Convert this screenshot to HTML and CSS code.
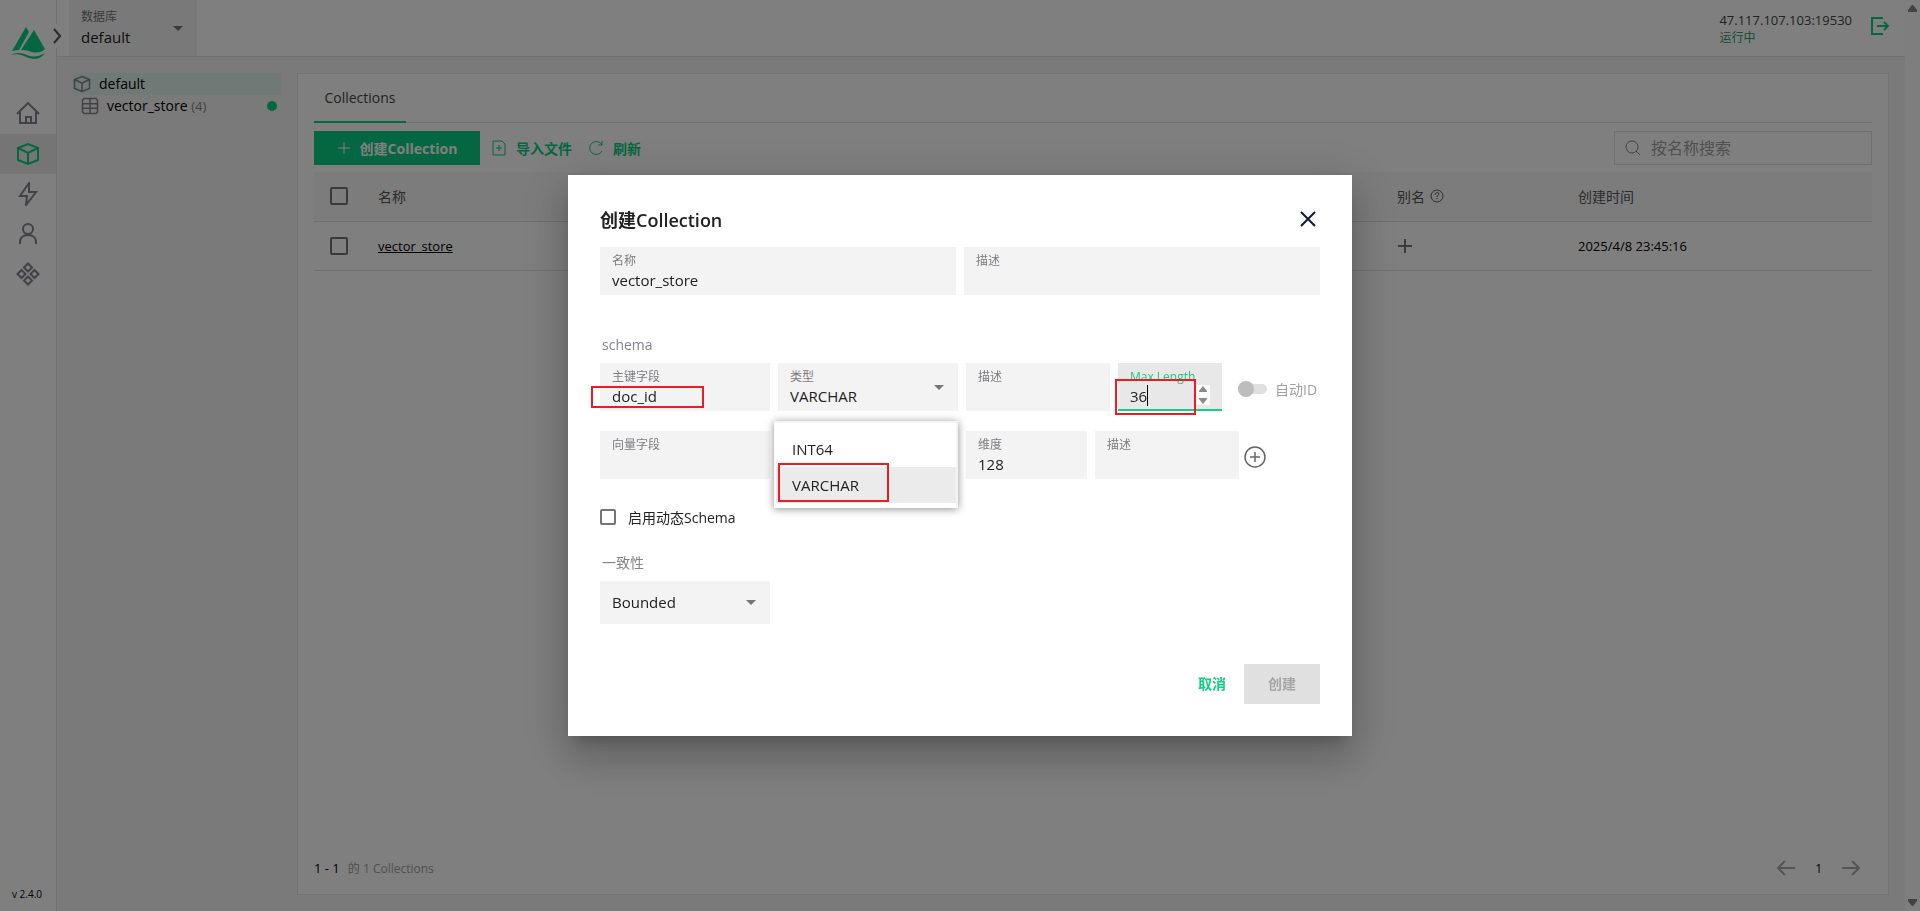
FILE: index.html
```html
<!DOCTYPE html>
<html lang="zh-CN">
<head>
    <meta charset="UTF-8">
    <meta name="viewport" content="width=device-width, initial-scale=1.0">
    <title>Attu</title>
    <link rel="stylesheet" href="styles.css">
</head>
<body>
    <div class="app">
        <aside class="sidebar">
            <svg class="logo" width="36" height="34" viewBox="0 0 36 34">
                <path d="M2 24 L16 0 L19 5 L9 23 Q6 23 2 24Z"/>
                <path d="M24 3 L35 22 Q30 27 22 25 Q17 23 11 23Z"/>
                <path d="M0 28 Q9 24 17 28 Q25 32 35 26 Q31 32 24 32 Q19 32 14 29 Q8 26 0 28Z"/>
            </svg>
            <button class="expand" type="button" aria-label="展开">
                <svg width="10" height="16" viewBox="0 0 10 16"><path d="M2 1l6 7-6 7"/></svg>
            </button>
            <nav class="nav">
                <a class="nav-item" href="#" aria-label="主页">
                    <svg width="24" height="24" viewBox="0 0 24 24"><path d="M1 12L12 1l11 11M4 10v11h16V10M10 21v-6h5v6"/></svg>
                </a>
                <a class="nav-item active" href="#" aria-label="数据库">
                    <svg width="24" height="24" viewBox="0 0 24 24"><path d="M12 2l10 4v12l-10 4-10-4V6zM2 6l10 5 10-5M12 11v11"/></svg>
                </a>
                <a class="nav-item" href="#" aria-label="搜索">
                    <svg width="24" height="24" viewBox="0 0 24 24"><path d="M13 1L4 14h7l-1 9 10-13h-7z"/></svg>
                </a>
                <a class="nav-item" href="#" aria-label="用户">
                    <svg width="24" height="24" viewBox="0 0 24 24"><circle cx="12" cy="7" r="5"/><path d="M4 22v-2c0-4 3-7 8-7s8 3 8 7v2"/></svg>
                </a>
                <a class="nav-item" href="#" aria-label="系统">
                    <svg width="24" height="24" viewBox="0 0 24 24"><path d="M12 1.500l4 4-4 4-4-4zM12 14.500l4 4-4 4-4-4zM5.500 8l4 4-4 4-4-4zM18.500 8l4 4-4 4-4-4z"/></svg>
                </a>
            </nav>
            <div class="version">v 2.4.0</div>
        </aside>

        <div class="main">
            <header class="header">
                <div class="db-select">
                    <label for="db">数据库</label>
                    <select id="db"><option>default</option></select>
                    <svg class="arrow" width="24" height="24" viewBox="0 0 24 24"><path d="M7 10l5 5 5-5z"/></svg>
                </div>
                <div class="server">
                    <div class="address">47.117.107.103:19530</div>
                    <div class="status">运行中</div>
                </div>
                <button class="logout" type="button" aria-label="退出">
                    <svg width="20" height="20" viewBox="0 0 20 20"><path d="M13 2H2v16h11M7 10h11M14 6l4 4-4 4"/></svg>
                </button>
            </header>

            <div class="content">
                <div class="tree">
                    <div class="tree-item selected">
                        <svg width="18" height="18" viewBox="0 0 24 24"><path d="M12 2l10 4v12l-10 4-10-4V6zM2 6l10 5 10-5M12 11v11"/></svg>
                        <span>default</span>
                    </div>
                    <div class="tree-item child">
                        <svg width="18" height="18" viewBox="0 0 24 24"><path d="M4 2h16l2 2v16l-2 2H4l-2-2V4zM2 9h20M2 15h20M12 3v19"/></svg>
                        <span>vector_store <span class="count">(4)</span></span>
                        <span class="dot"></span>
                    </div>
                </div>

                <section class="panel">
                    <div class="tabs"><button class="tab" type="button">Collections</button></div>
                    <div class="toolbar">
                        <button class="btn primary" type="button">
                            <svg width="14" height="14" viewBox="0 0 14 14"><path d="M7 1v12M1 7h12"/></svg>
                            创建Collection
                        </button>
                        <button class="btn" type="button">
                            <svg width="16" height="18" viewBox="0 0 16 18"><path d="M2 2h9l3 3v11H2zM8 6v6M5 9h6"/></svg>
                            导入文件
                        </button>
                        <button class="btn" type="button">
                            <svg width="16" height="16" viewBox="0 0 16 16"><path d="M14 5a6.500 6.500 0 1 0 0 6M14 1v4h-4"/></svg>
                            刷新
                        </button>
                        <div class="search">
                            <svg width="16" height="16" viewBox="0 0 16 16"><circle cx="7" cy="7" r="6"/><path d="M11 11l4 4"/></svg>
                            <input type="text" placeholder="按名称搜索" aria-label="按名称搜索">
                        </div>
                    </div>
                    <table class="table">
                        <thead>
                            <tr>
                                <th class="col-check"><input type="checkbox" aria-label="全选"></th>
                                <th>名称</th>
                                <th class="col-alias"><span class="th-help">别名
                                    <svg width="14" height="14" viewBox="0 0 14 14"><circle cx="7" cy="7" r="6"/><path d="M5 6c0-3 4-3 4-1 0 1-2 1-2 3M7 9v1"/></svg></span>
                                </th>
                                <th class="col-time">创建时间</th>
                            </tr>
                        </thead>
                        <tbody>
                            <tr>
                                <td><input type="checkbox" aria-label="vector_store"></td>
                                <td><a href="#">vector_store</a></td>
                                <td><svg class="add" width="16" height="16" viewBox="0 0 16 16"><path d="M8 1v14M1 8h14"/></svg></td>
                                <td>2025/4/8 23:45:16</td>
                            </tr>
                        </tbody>
                    </table>
                    <footer class="pager">
                        <span>1 - 1</span>
                        <span class="total">的 1 Collections</span>
                        <button class="prev" type="button" aria-label="上一页"><svg width="18" height="16" viewBox="0 0 18 16"><path d="M18 8H2M8 1L1 8l7 7"/></svg></button>
                        <span class="page">1</span>
                        <button type="button" aria-label="下一页"><svg width="18" height="16" viewBox="0 0 18 16"><path d="M0 8h16M10 1l7 7-7 7"/></svg></button>
                    </footer>
                </section>
            </div>
        </div>
        <div class="scroll-rail">
            <svg width="9" height="7" viewBox="0 0 9 7"><path d="M4 0h1l4 5v2H0V5z"/></svg>
            <svg width="9" height="7" viewBox="0 0 9 7"><path d="M4 7h1l4-5V0H0v2z"/></svg>
        </div>
    </div>

    <div class="backdrop">
        <form class="dialog" role="dialog" aria-labelledby="dialogTitle">
            <div class="dialog-head">
                <h2 id="dialogTitle">创建Collection</h2>
                <button class="close" type="button" aria-label="关闭">
                    <svg width="16" height="16" viewBox="0 0 16 16"><path d="M1 1l14 14M15 1L1 15"/></svg>
                </button>
            </div>

            <div class="row">
                <div class="field grow">
                    <label for="name">名称</label>
                    <input id="name" type="text" value="vector_store">
                </div>
                <div class="field grow">
                    <label for="desc">描述</label>
                    <input id="desc" type="text">
                </div>
            </div>

            <h3 class="section schema">schema</h3>
            <div class="row">
                <div class="field w-name">
                    <label for="pk">主键字段</label>
                    <input id="pk" type="text" value="doc_id">
                    <span class="mark mark-pk"></span>
                </div>
                <div class="field w-type">
                    <label for="pkType">类型</label>
                    <select id="pkType"><option>INT64</option><option selected>VARCHAR</option></select>
                    <svg class="arrow" width="24" height="24" viewBox="0 0 24 24"><path d="M7 10l5 5 5-5z"/></svg>
                    <ul class="menu" role="listbox" aria-label="类型">
                        <li role="option">INT64</li>
                        <li role="option" class="current" aria-selected="true">VARCHAR<span class="mark mark-type"></span></li>
                    </ul>
                </div>
                <div class="field w-desc">
                    <label for="pkDesc">描述</label>
                    <input id="pkDesc" type="text">
                </div>
                <div class="field w-length focused">
                    <label for="maxLength">Max Length</label>
                    <input id="maxLength" type="text" inputmode="numeric" value="36">
                    <span class="caret"></span>
                    <span class="spinner">
                        <svg width="8" height="18" viewBox="0 0 8 18"><path d="M4 0l4 5v1H0V5zM4 18l4-5v-1H0v1z"/></svg>
                    </span>
                    <span class="mark mark-length"></span>
                </div>
                <label class="toggle"><input type="checkbox" disabled><span class="track"></span>自动ID</label>
            </div>

            <div class="row vector-row">
                <div class="field w-name">
                    <label for="vector">向量字段</label>
                    <input id="vector" type="text">
                </div>
                <div class="field w-type"></div>
                <div class="field w-dim">
                    <label for="dim">维度</label>
                    <input id="dim" type="text" value="128">
                </div>
                <div class="field w-desc">
                    <label for="vectorDesc">描述</label>
                    <input id="vectorDesc" type="text">
                </div>
                <button class="add-field" type="button" aria-label="添加字段">
                    <svg width="24" height="24" viewBox="0 0 24 24"><circle cx="12" cy="12" r="10"/><path d="M12 7v10M7 12h10"/></svg>
                </button>
            </div>

            <label class="dynamic"><input type="checkbox">启用动态Schema</label>

            <label class="section" for="consistency">一致性</label>
            <div class="field w-name plain">
                <select id="consistency"><option>Bounded</option></select>
                <svg class="arrow" width="24" height="24" viewBox="0 0 24 24"><path d="M7 10l5 5 5-5z"/></svg>
            </div>

            <div class="actions">
                <button class="cancel" type="button">取消</button>
                <button class="create" type="submit" disabled>创建</button>
            </div>
        </form>
    </div>
</body>
</html>
```

FILE: styles.css
```css
* {
    box-sizing: border-box;
}
body {
    margin: 0;
    font-family: "Open Sans", "Noto Sans CJK SC", sans-serif;
    font-size: 13px;
    color: #000;
    overflow: hidden;
}
button, input, select {
    font: inherit;
    color: inherit;
    margin: 0;
    padding: 0;
    border: none;
    background: none;
    outline: none;
}
select {
    appearance: none;
}
svg {
    display: block;
    flex: none;
    fill: none;
    stroke: currentColor;
}
.arrow {
    position: absolute;
    right: 7px;
    top: 12px;
    fill: #757575;
    stroke: none;
    pointer-events: none;
}
.app {
    display: flex;
    height: 100vh;
}

/* sidebar */
.sidebar {
    position: relative;
    display: flex;
    flex-direction: column;
    width: 57px;
    border-right: 1px solid #e0e0e0;
}
.logo {
    margin: 27px 0 0 10px;
    fill: #0acf83;
    stroke: none;
}
.expand {
    position: absolute;
    left: 52px;
    top: 24px;
    height: 24px;
    background: #fff;
    color: #555;
    stroke-width: 2;
    z-index: 1;
}
.nav {
    margin-top: 33px;
    flex: 1;
}
.nav-item {
    display: flex;
    align-items: center;
    justify-content: center;
    height: 40px;
    color: #82838e;
    stroke-width: 2;
}
.nav-item.active {
    background: #ebebeb;
    color: #0acf83;
}
.version {
    padding: 0 0 10px 12px;
    font-size: 10px;
    line-height: 14px;
}

/* header */
.main {
    display: flex;
    flex-direction: column;
    flex: 1;
    min-width: 0;
}
.header {
    display: flex;
    align-items: center;
    height: 57px;
    padding: 0 12px;
    border-bottom: 1px solid #e0e0e0;
}
.db-select {
    position: relative;
    width: 128px;
    height: 56px;
    padding: 8px 12px;
    background: #f3f3f3;
}
.db-select label {
    display: block;
    font-size: 12px;
    line-height: 18px;
    color: #757575;
}
.db-select select {
    display: block;
    width: 100%;
    height: 22px;
    font-size: 15px;
    color: #222;
}
.db-select .arrow {
    top: 16px;
}
.server {
    margin-left: auto;
    padding-top: 2px;
    line-height: 18px;
}
.address {
    font-size: 13px;
    color: #444;
}
.status {
    font-size: 12px;
    color: #2a9d60;
}
.logout {
    margin: 0 3px 4px 18px;
    color: #0acf83;
    stroke-width: 2;
}
.scroll-rail {
    display: flex;
    flex-direction: column;
    justify-content: space-between;
    align-items: center;
    width: 15px;
    padding: 5px 0;
    background: #fcfcfc;
    color: #858585;
}
.scroll-rail svg {
    fill: currentColor;
    stroke: none;
}

/* tree */
.content {
    display: flex;
    flex: 1;
    gap: 16px;
    padding: 16px;
    background: #f5f5f5;
}
.tree {
    width: 208px;
}
.tree-item {
    display: flex;
    align-items: center;
    gap: 8px;
    height: 22px;
    font-size: 14px;
    line-height: 20px;
}
.tree-item.selected {
    background: #dff3ec;
}
.tree-item.child {
    height: 24px;
    padding: 0 4px 2px 8px;
}
.tree-item svg {
    color: #82838e;
    stroke-width: 2;
}
.count {
    font-size: 13px;
    color: #82838e;
}
.dot {
    width: 10px;
    height: 10px;
    margin-left: auto;
    border-radius: 50%;
    background: #0acf83;
}

/* collections panel */
.panel {
    display: flex;
    flex-direction: column;
    flex: 1;
    padding: 0 16px;
    border: 1px solid #e6e6e6;
    background: #fff;
}
.tabs {
    height: 49px;
    border-bottom: 1px solid #e0e0e0;
}
.tab {
    width: 92px;
    height: 49px;
    border-bottom: 2px solid #0acf83;
    font-size: 14px;
    color: #444;
}
.toolbar {
    display: flex;
    align-items: center;
    margin: 8px 0 7px;
}
.btn {
    display: flex;
    align-items: center;
    gap: 9px;
    height: 34px;
    margin-left: 16px;
    font-size: 14px;
    font-weight: bold;
    color: #0acf83;
}
.btn:nth-child(2) {
    margin-left: 11px;
}
.btn.primary {
    justify-content: center;
    width: 166px;
    margin-left: 0;
    background: #0acf83;
    color: #fff;
}
.search {
    display: flex;
    align-items: center;
    gap: 10px;
    width: 258px;
    height: 34px;
    margin-left: auto;
    padding: 0 10px;
    border: 1px solid #e0e0e0;
    color: #82838e;
}
.search input {
    width: 100%;
    font-size: 16px;
}
.search input::placeholder {
    color: #a0a0a0;
}
.table {
    width: 100%;
    border-collapse: collapse;
    table-layout: fixed;
}
.table th, .table td {
    height: 49px;
    padding: 0 16px;
    border-bottom: 1px solid #e0e0e0;
    text-align: left;
    font-weight: normal;
}
.table th {
    background: #f9f9f9;
    font-size: 14px;
    color: #555;
}
.table a {
    color: #000;
}
.col-check {
    width: 48px;
}
.col-alias {
    width: 181px;
}
.col-time {
    width: 310px;
}
.th-help {
    display: flex;
    align-items: center;
    gap: 5px;
}
.add {
    color: #777;
    stroke-width: 2;
}
.table input, .dynamic input {
    display: block;
    appearance: none;
    width: 18px;
    height: 18px;
    border: 2px solid #757575;
    border-radius: 2px;
}
.pager {
    display: flex;
    align-items: center;
    margin-top: auto;
    padding: 0 12px 17px 0;
}
.total {
    margin-left: 8px;
    font-size: 12px;
    color: #a0a0a0;
}
.pager button {
    color: #aaa;
    stroke-width: 2;
}
.prev {
    margin-left: auto;
}
.page {
    padding: 0 20px;
    font-size: 12px;
}

/* dialog */
.backdrop {
    position: fixed;
    inset: 0;
    display: flex;
    align-items: center;
    justify-content: center;
    background: rgba(0, 0, 0, 0.5);
    z-index: 10;
}
.dialog {
    width: 784px;
    padding: 31px 32px 32px;
    background: #fff;
    box-shadow: 0 11px 15px -7px rgba(0, 0, 0, 0.2), 0 24px 38px 3px rgba(0, 0, 0, 0.14), 0 9px 46px 8px rgba(0, 0, 0, 0.12);
}
.dialog-head {
    display: flex;
    align-items: center;
    justify-content: space-between;
    height: 26px;
    margin-bottom: 15px;
}
.dialog-head h2 {
    margin: 0;
    font-size: 18px;
    font-weight: 600;
    color: #222;
}
.close {
    margin-right: 4px;
    color: #10193a;
    stroke-width: 2;
}
.row {
    display: flex;
    align-items: center;
    gap: 8px;
}
.field {
    position: relative;
    height: 48px;
    padding: 6px 12px 0;
    background: #f3f3f3;
}
.field label {
    display: block;
    font-size: 12px;
    line-height: 16px;
    color: #7c7c82;
}
.field input, .field select {
    display: block;
    width: 100%;
    height: 22px;
    font-size: 15px;
    color: #222;
}
.grow {
    flex: 1;
}
.w-name {
    width: 170px;
}
.w-type {
    width: 180px;
}
.w-desc {
    width: 144px;
}
.w-dim {
    width: 121px;
}
.w-length {
    width: 104px;
}
.focused {
    background: #e8e8e8;
    border-bottom: 2px solid #13ce87;
}
.field.focused label {
    color: #13ce87;
}
.caret {
    position: absolute;
    left: 29px;
    top: 22px;
    width: 1px;
    height: 21px;
    background: #000;
}
.spinner {
    position: absolute;
    right: 12px;
    top: 22px;
    padding: 1px 3px;
    background: #fafafa;
}
.spinner svg {
    fill: #8a8a8a;
    stroke: none;
}
.mark {
    position: absolute;
    border: 2px solid #ed1c24;
    z-index: 3;
}
.mark-pk {
    left: -9px;
    top: 23px;
    width: 113px;
    height: 22px;
}
.mark-length {
    left: -3px;
    top: 16px;
    width: 81px;
    height: 36px;
}
.mark-type {
    left: 2px;
    top: -4px;
    width: 111px;
    height: 39px;
}
.menu {
    position: absolute;
    left: -4px;
    top: 58px;
    width: 184px;
    margin: 0;
    padding: 8px 0 5px 2px;
    list-style: none;
    background: #fff;
    border-top: 2px solid #f4f4f4;
    border-right: 2px solid #f4f4f4;
    box-shadow: 0 1px 8px rgba(0, 0, 0, 0.45);
    z-index: 2;
}
.menu li {
    position: relative;
    height: 36px;
    padding: 0 16px;
    font-size: 15px;
    line-height: 36px;
    color: #222;
}
.menu .current {
    background: #ebebeb;
}
.section {
    display: block;
    margin: 0 2px 8px;
    font-size: 14px;
    font-weight: normal;
    line-height: 20px;
    color: #82838e;
}
.schema {
    margin-top: 40px;
}
.toggle {
    display: flex;
    align-items: center;
    gap: 8px;
    margin-left: 8px;
    padding-top: 3px;
    font-size: 14px;
    color: #a0a0a0;
}
.toggle input {
    position: absolute;
    opacity: 0;
}
.track {
    position: relative;
    width: 29px;
    height: 10px;
    border-radius: 5px;
    background: #e0e0e0;
}
.track::before {
    content: "";
    position: absolute;
    left: 0;
    top: -3px;
    width: 16px;
    height: 16px;
    border-radius: 50%;
    background: #bdbdbd;
}
.vector-row {
    margin-top: 20px;
}
.add-field {
    margin-left: -4px;
    padding-top: 4px;
    color: #666;
    stroke-width: 1.5;
}
.dynamic {
    display: flex;
    align-items: center;
    gap: 12px;
    height: 20px;
    margin: 28px 0 26px;
    font-size: 14px;
    color: #222;
}
.dynamic input {
    width: 16px;
    height: 16px;
}
.plain {
    height: 43px;
    padding: 10px 12px;
}
.plain .arrow {
    top: 9px;
}
.actions {
    display: flex;
    justify-content: flex-end;
    margin-top: 40px;
    font-size: 14px;
    font-weight: bold;
}
.actions button {
    height: 40px;
    padding-bottom: 2px;
}
.actions .cancel {
    padding: 0 18px 2px;
    color: #13ce87;
}
.create {
    width: 76px;
    background: #e0e0e0;
    color: #a6a6a6;
}
```
